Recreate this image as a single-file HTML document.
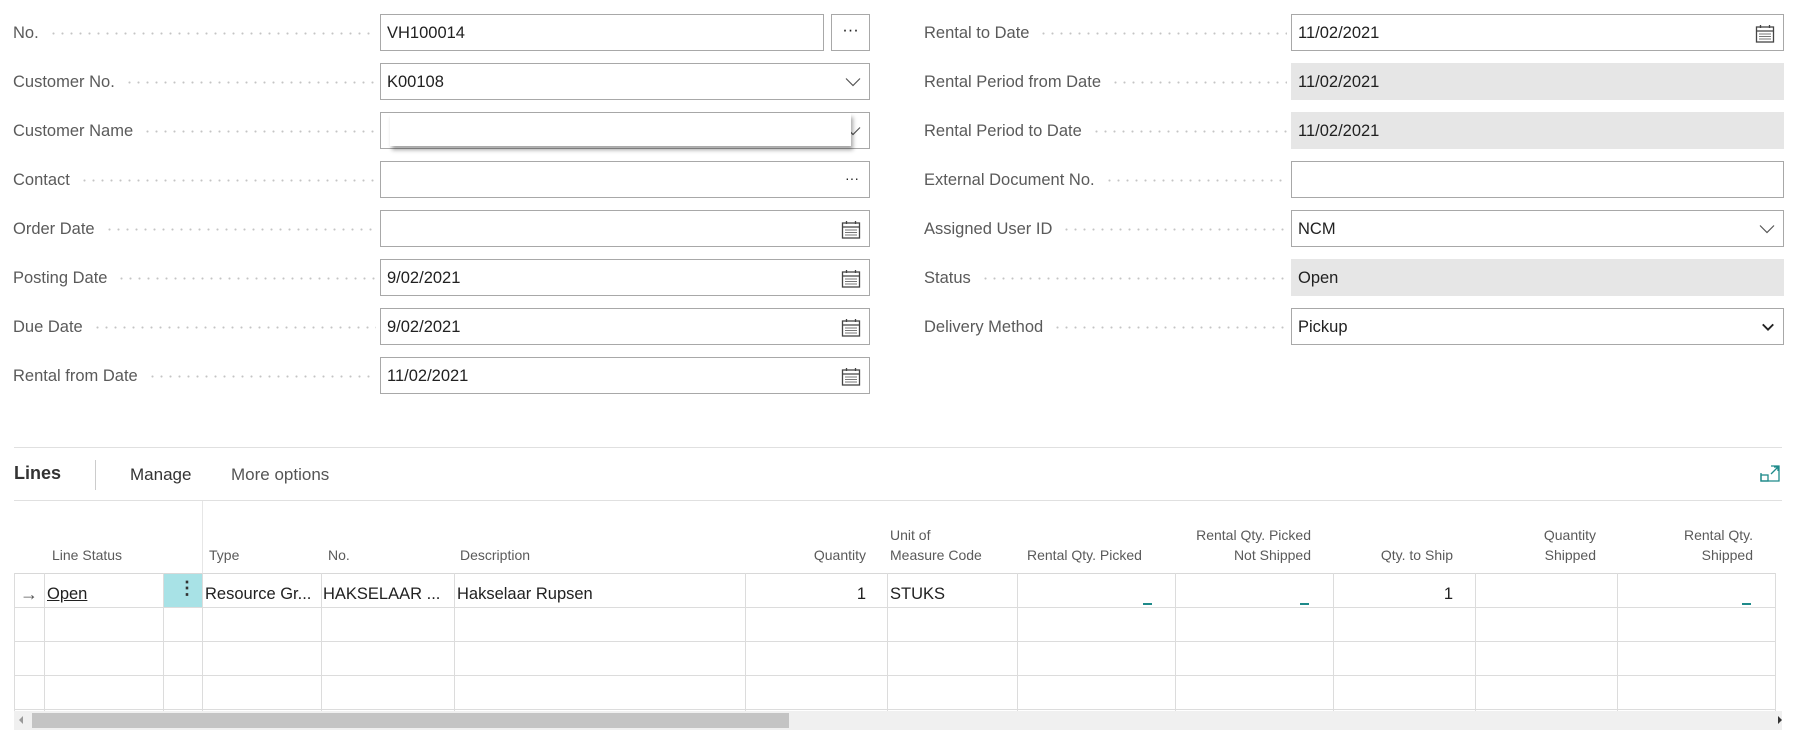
<!DOCTYPE html>
<html><head><meta charset="utf-8"><style>
*{box-sizing:border-box;margin:0;padding:0}
body{width:1796px;height:736px;background:#fff;font-family:"Liberation Sans",sans-serif;position:relative;overflow:hidden;color:#212121}
.a{position:absolute}
.lab{position:absolute;font-size:16.5px;color:#5a5a5a;height:36px;line-height:36px;white-space:nowrap;display:flex}
.lab span.d{flex:1;margin-left:10px;margin-right:4px;height:36px;background:radial-gradient(circle,#c4c4c4 0.9px,transparent 1.2px) 0 17px/9px 3px repeat-x}
.inp{position:absolute;height:37px;border:1px solid #a8a8a8;background:#fff;font-size:16.5px;line-height:37px;padding-left:6px;color:#212121}
.ro{background:#e6e6e6;border-color:#e6e6e6}
.ic{position:absolute;right:8px;top:9px}
.th{position:absolute;font-size:14px;color:#5a5a5a;line-height:20px}
.vl{position:absolute;width:1px;background:#dcdcdc;top:573px;height:140px}
.hl{position:absolute;height:1px;background:#dcdcdc;left:14px;width:1762px}
.td{position:absolute;font-size:16.5px;top:580px;line-height:28px}
.dash{position:absolute;top:603px;width:9px;height:2px;background:#1e8a8a}
</style></head><body>
<div class="lab" style="left:13px;top:15px;width:367px">No.<span class="d"></span></div>
<div class="lab" style="left:13px;top:64px;width:367px">Customer No.<span class="d"></span></div>
<div class="lab" style="left:13px;top:113px;width:367px">Customer Name<span class="d"></span></div>
<div class="lab" style="left:13px;top:162px;width:367px">Contact<span class="d"></span></div>
<div class="lab" style="left:13px;top:211px;width:367px">Order Date<span class="d"></span></div>
<div class="lab" style="left:13px;top:260px;width:367px">Posting Date<span class="d"></span></div>
<div class="lab" style="left:13px;top:309px;width:367px">Due Date<span class="d"></span></div>
<div class="lab" style="left:13px;top:358px;width:367px">Rental from Date<span class="d"></span></div>

<svg width="0" height="0" style="position:absolute"><defs>
<symbol id="cal" viewBox="0 0 20 20"><rect x="1.5" y="3" width="17" height="15" fill="none" stroke="#444" stroke-width="1.3"/><line x1="1.5" y1="7" x2="18.5" y2="7" stroke="#444" stroke-width="1.3"/><line x1="5.5" y1="1" x2="5.5" y2="4" stroke="#444" stroke-width="1.3"/><line x1="14.5" y1="1" x2="14.5" y2="4" stroke="#444" stroke-width="1.3"/><g fill="#777"><rect x="4" y="9.5" width="12" height="1"/><rect x="4" y="12" width="12" height="1"/><rect x="4" y="14.5" width="12" height="1"/></g></symbol>
<symbol id="chev" viewBox="0 0 16 10"><path d="M1 1.5 L8 8.5 L15 1.5" fill="none" stroke="#555" stroke-width="1.2"/></symbol>
</defs></svg>

<div class="inp" style="left:380px;top:14px;width:444px">VH100014</div>
<div class="inp" style="left:831px;top:14px;width:39px;text-align:center;padding:0;line-height:30px">···</div>
<div class="inp" style="left:380px;top:63px;width:490px">K00108<svg class="ic" style="top:13px" width="16" height="10"><use href="#chev"/></svg></div>
<div class="inp" style="left:380px;top:112px;width:490px"><svg class="ic" style="top:13px" width="16" height="10"><use href="#chev"/></svg></div>
<div class="a" style="left:390px;top:113px;width:461px;height:33px;background:#fff;box-shadow:2px 4px 4px rgba(0,0,0,.35)"></div>
<div class="inp" style="left:380px;top:161px;width:490px"><span class="a" style="right:10px;top:-2px;font-size:14px">···</span></div>
<div class="inp" style="left:380px;top:210px;width:490px"><svg class="ic" width="20" height="20"><use href="#cal"/></svg></div>
<div class="inp" style="left:380px;top:259px;width:490px">9/02/2021<svg class="ic" width="20" height="20"><use href="#cal"/></svg></div>
<div class="inp" style="left:380px;top:308px;width:490px">9/02/2021<svg class="ic" width="20" height="20"><use href="#cal"/></svg></div>
<div class="inp" style="left:380px;top:357px;width:490px">11/02/2021<svg class="ic" width="20" height="20"><use href="#cal"/></svg></div>

<div class="lab" style="left:924px;top:15px;width:367px">Rental to Date<span class="d"></span></div>
<div class="lab" style="left:924px;top:64px;width:367px">Rental Period from Date<span class="d"></span></div>
<div class="lab" style="left:924px;top:113px;width:367px">Rental Period to Date<span class="d"></span></div>
<div class="lab" style="left:924px;top:162px;width:367px">External Document No.<span class="d"></span></div>
<div class="lab" style="left:924px;top:211px;width:367px">Assigned User ID<span class="d"></span></div>
<div class="lab" style="left:924px;top:260px;width:367px">Status<span class="d"></span></div>
<div class="lab" style="left:924px;top:309px;width:367px">Delivery Method<span class="d"></span></div>

<div class="inp" style="left:1291px;top:14px;width:493px">11/02/2021<svg class="ic" width="20" height="20"><use href="#cal"/></svg></div>
<div class="inp ro" style="left:1291px;top:63px;width:493px">11/02/2021</div>
<div class="inp ro" style="left:1291px;top:112px;width:493px">11/02/2021</div>
<div class="inp" style="left:1291px;top:161px;width:493px"></div>
<div class="inp" style="left:1291px;top:210px;width:493px">NCM<svg class="ic" style="top:13px" width="16" height="10"><use href="#chev"/></svg></div>
<div class="inp ro" style="left:1291px;top:259px;width:493px">Open</div>
<div class="inp" style="left:1291px;top:308px;width:493px">Pickup<svg class="ic" style="top:13px" width="14" height="10" viewBox="0 0 16 10"><path d="M2 2 L8 8 L14 2" fill="none" stroke="#222" stroke-width="2.2"/></svg></div>

<div class="a" style="left:14px;top:447px;width:1768px;height:1px;background:#e0e0e0"></div>
<div class="a" style="left:14px;top:463px;font-size:18px;font-weight:bold;color:#333">Lines</div>
<div class="a" style="left:95px;top:460px;width:1px;height:30px;background:#ccc"></div>
<div class="a" style="left:130px;top:465px;font-size:17px;color:#333">Manage</div>
<div class="a" style="left:231px;top:465px;font-size:17px;color:#555">More options</div>
<svg class="a" style="left:1760px;top:465px" width="20" height="17" viewBox="0 0 20 17"><path d="M11 1H19V16H1V8" fill="none" stroke="#1e8a8a" stroke-width="1.3"/><rect x="1" y="10" width="7" height="6" fill="none" stroke="#1e8a8a" stroke-width="1.3"/><path d="M11 9L18 2M14 2H18V6" fill="none" stroke="#1e8a8a" stroke-width="1.3"/></svg>
<div class="a" style="left:14px;top:500px;width:1768px;height:1px;background:#e0e0e0"></div>
<div class="a" style="left:202px;top:501px;width:1px;height:72px;background:#e6e6e6"></div>

<div class="th" style="left:52px;top:545px">Line Status</div>
<div class="th" style="left:209px;top:545px">Type</div>
<div class="th" style="left:328px;top:545px">No.</div>
<div class="th" style="left:460px;top:545px">Description</div>
<div class="th" style="left:760px;width:106px;text-align:right;top:545px">Quantity</div>
<div class="th" style="left:890px;top:525px">Unit of<br>Measure Code</div>
<div class="th" style="left:1027px;top:545px">Rental Qty. Picked</div>
<div class="th" style="left:1160px;width:151px;text-align:right;top:525px">Rental Qty. Picked<br>Not Shipped</div>
<div class="th" style="left:1340px;width:113px;text-align:right;top:545px">Qty. to Ship</div>
<div class="th" style="left:1480px;width:116px;text-align:right;top:525px">Quantity<br>Shipped</div>
<div class="th" style="left:1620px;width:133px;text-align:right;top:525px">Rental Qty.<br>Shipped</div>

<div class="hl" style="top:573px;background:#d8d8d8"></div>
<div class="hl" style="top:607px"></div>
<div class="hl" style="top:641px"></div>
<div class="hl" style="top:675px"></div>
<div class="hl" style="top:709px"></div>
<div class="vl" style="left:14px"></div>
<div class="vl" style="left:44px"></div>
<div class="vl" style="left:163px"></div>
<div class="vl" style="left:202px"></div>
<div class="vl" style="left:321px"></div>
<div class="vl" style="left:454px"></div>
<div class="vl" style="left:745px"></div>
<div class="vl" style="left:887px"></div>
<div class="vl" style="left:1017px"></div>
<div class="vl" style="left:1175px"></div>
<div class="vl" style="left:1333px"></div>
<div class="vl" style="left:1475px"></div>
<div class="vl" style="left:1617px"></div>
<div class="vl" style="left:1775px"></div>
<div class="a" style="left:164px;top:574px;width:38px;height:33px;background:#a8e2e6"></div>
<div class="a" style="left:178px;top:578px;font-size:18px;font-weight:bold;color:#333">⋮</div>

<div class="td" style="left:20px;color:#555;font-size:18px">→</div>
<div class="td" style="left:47px;text-decoration:underline">Open</div>
<div class="td" style="left:205px">Resource Gr...</div>
<div class="td" style="left:323px">HAKSELAAR ...</div>
<div class="td" style="left:457px">Hakselaar Rupsen</div>
<div class="td" style="left:820px;width:46px;text-align:right">1</div>
<div class="td" style="left:890px">STUKS</div>
<div class="dash" style="left:1143px"></div>
<div class="dash" style="left:1300px"></div>
<div class="td" style="left:1400px;width:53px;text-align:right">1</div>
<div class="dash" style="left:1742px"></div>

<div class="a" style="left:14px;top:711px;width:1768px;height:19px;background:#f0f0f0"></div>
<div class="a" style="left:32px;top:713px;width:757px;height:15px;background:#c4c4c4"></div>
<div class="a" style="left:19px;top:716px;width:0;height:0;border-top:4px solid transparent;border-bottom:4px solid transparent;border-right:4px solid #999"></div>
<div class="a" style="left:1778px;top:716px;width:0;height:0;border-top:4px solid transparent;border-bottom:4px solid transparent;border-left:4px solid #333"></div>
</body></html>
